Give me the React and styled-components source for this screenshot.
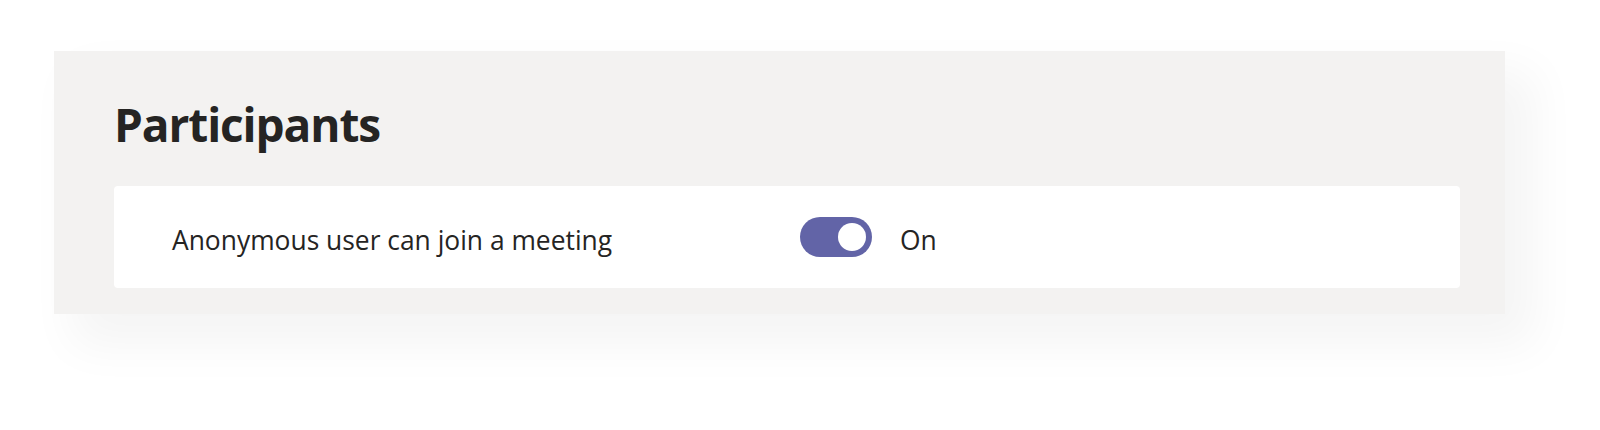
import React, { useState } from "react";
import styled, { createGlobalStyle } from "styled-components";

const GlobalStyle = createGlobalStyle`
  html, body {
    margin: 0;
    background: #fff;
    font-family: "Open Sans", "Noto Sans", sans-serif;
  }
`;

const Page = styled.div`
  min-height: 430px;
  box-sizing: border-box;
  padding: 51px 0 0 54px;
`;

const Panel = styled.section`
  width: 1451px;
  height: 263px;
  box-sizing: border-box;
  padding: 0 45px 0 60px;
  background: #f3f2f1;
  box-shadow: 24px 26px 44px 6px rgba(0, 0, 0, 0.045);
  display: flex;
  flex-direction: column;
`;

const Title = styled.h2`
  margin: 0;
  height: 135px;
  padding-top: 42px;
  box-sizing: border-box;
  font-size: 46px;
  line-height: 62px;
  font-weight: 700;
  color: #252423;
  letter-spacing: -1.1px;
`;

const SettingCard = styled.div`
  height: 102px;
  box-sizing: border-box;
  padding-left: 58px;
  background: #fff;
  border-radius: 4px;
  display: grid;
  grid-template-columns: 628px auto;
  align-items: center;
`;

const Label = styled.span`
  padding-top: 5px;
  font-size: 26.4px;
  color: #252423;
`;

const ToggleRow = styled.div`
  display: flex;
  align-items: center;
  gap: 28px;
`;

const Track = styled.button`
  width: 72px;
  height: 40px;
  padding: 0 6px;
  border: none;
  border-radius: 20px;
  background: ${p => (p.on ? "#6264a7" : "#c8c6c4")};
  display: flex;
  align-items: center;
  justify-content: ${p => (p.on ? "flex-end" : "flex-start")};
  cursor: pointer;
`;

const Knob = styled.span`
  width: 28px;
  height: 28px;
  border-radius: 50%;
  background: #fff;
`;

const State = styled.span`
  padding-top: 5px;
  font-size: 26.4px;
  color: #252423;
`;

export default function App() {
  const [on, setOn] = useState(true);
  return (
    <>
      <GlobalStyle />
      <Page>
        <Panel>
          <Title>Participants</Title>
          <SettingCard>
            <Label>Anonymous user can join a meeting</Label>
            <ToggleRow>
              <Track on={on ? 1 : 0} onClick={() => setOn(!on)}>
                <Knob />
              </Track>
              <State>{on ? "On" : "Off"}</State>
            </ToggleRow>
          </SettingCard>
        </Panel>
      </Page>
    </>
  );
}
